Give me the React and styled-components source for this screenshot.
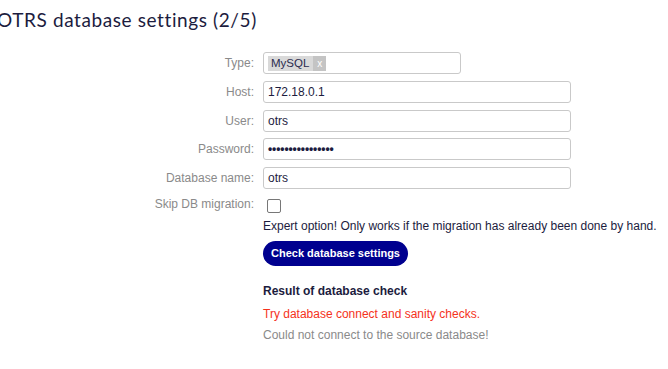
import React from 'react';
import styled, { createGlobalStyle } from 'styled-components';

const GlobalStyle = createGlobalStyle`
  html, body {
    margin: 0;
    padding: 0;
    background: #fff;
  }
  body {
    font-family: "Liberation Sans", Arial, sans-serif;
    overflow: hidden;
  }
`;

const Page = styled.div`
  width: 668px;
  height: 369px;
  padding: 9px 0 0 0;
  box-sizing: border-box;
`;

const Title = styled.h1`
  margin: 0 0 0 -3px;
  font: 400 19px "Lato", "Noto Sans", sans-serif;
  letter-spacing: 0.6px;
  color: #1c1c3e;
  line-height: 22px;
`;

const Form = styled.div`
  display: grid;
  grid-template-columns: 254px 1fr;
  column-gap: 9px;
  row-gap: 6.8px;
  margin-top: 21px;
  align-items: center;
`;

const Label = styled.label`
  text-align: right;
  font-size: 12px;
  color: #8a8a8a;
`;

const Field = styled.div`
  display: flex;
  flex-direction: column;
  align-items: flex-start;
`;

const Input = styled.div`
  width: ${p => p.$width}px;
  height: 22px;
  box-sizing: border-box;
  border: 1px solid #c9c9c9;
  border-radius: 3px;
  display: flex;
  align-items: center;
  padding: 0 4px;
  font-size: 12px;
  color: #1c1c3e;
`;

const Tag = styled.span`
  display: inline-flex;
  align-items: stretch;
  height: 15px;
  background: #d9d9d9;
  font-size: 11.5px;
  color: #2b2b4e;
  line-height: 15px;
  padding-left: 3px;
`;

const TagClose = styled.span`
  margin-left: 4px;
  width: 13px;
  background: #c4c4c4;
  color: #fff;
  text-align: center;
  font-size: 10px;
`;

const Dots = styled.span`
  font-size: 12px;
  font-weight: 700;
  letter-spacing: -0.1px;
  color: #1c1c3e;
`;

const Checkbox = styled.span`
  display: block;
  width: 12px;
  height: 12px;
  margin: 3px 0 0 4px;
  border: 1px solid #777;
  border-radius: 2px;
`;

const Spacer = styled.div``;

const Hint = styled.div`
  font-size: 12px;
  color: #1c1c3e;
  margin-top: -1px;
`;

const Button = styled.button`
  margin-top: 8px;
  height: 25px;
  padding: 0 8px;
  border: none;
  border-radius: 13px;
  background: #00008f;
  color: #fff;
  font: 700 11px "Liberation Sans", Arial, sans-serif;
`;

const ResultTitle = styled.div`
  margin-top: 18px;
  font-size: 12px;
  font-weight: 700;
  color: #1c1c3e;
`;

const ErrorLine = styled.div`
  margin-top: 9px;
  font-size: 12px;
  color: #f5321c;
`;

const InfoLine = styled.div`
  margin-top: 7px;
  font-size: 12px;
  color: #8a8a8a;
`;

export default function App() {
  return (
    <Page>
      <GlobalStyle />
      <Title>OTRS database settings (2/5)</Title>
      <Form>
        <Label>Type:</Label>
        <Field>
          <Input $width={198}>
            <Tag>
              MySQL<TagClose>x</TagClose>
            </Tag>
          </Input>
        </Field>

        <Label>Host:</Label>
        <Field>
          <Input $width={308}>172.18.0.1</Input>
        </Field>

        <Label>User:</Label>
        <Field>
          <Input $width={308}>otrs</Input>
        </Field>

        <Label>Password:</Label>
        <Field>
          <Input $width={308}>
            <Dots>••••••••••••••••</Dots>
          </Input>
        </Field>

        <Label>Database name:</Label>
        <Field>
          <Input $width={308}>otrs</Input>
        </Field>

        <Label>Skip DB migration:</Label>
        <Field>
          <Checkbox />
        </Field>

        <Spacer />
        <Field>
          <Hint>Expert option! Only works if the migration has already been done by hand.</Hint>
          <Button>Check database settings</Button>
          <ResultTitle>Result of database check</ResultTitle>
          <ErrorLine>Try database connect and sanity checks.</ErrorLine>
          <InfoLine>Could not connect to the source database!</InfoLine>
        </Field>
      </Form>
    </Page>
  );
}
